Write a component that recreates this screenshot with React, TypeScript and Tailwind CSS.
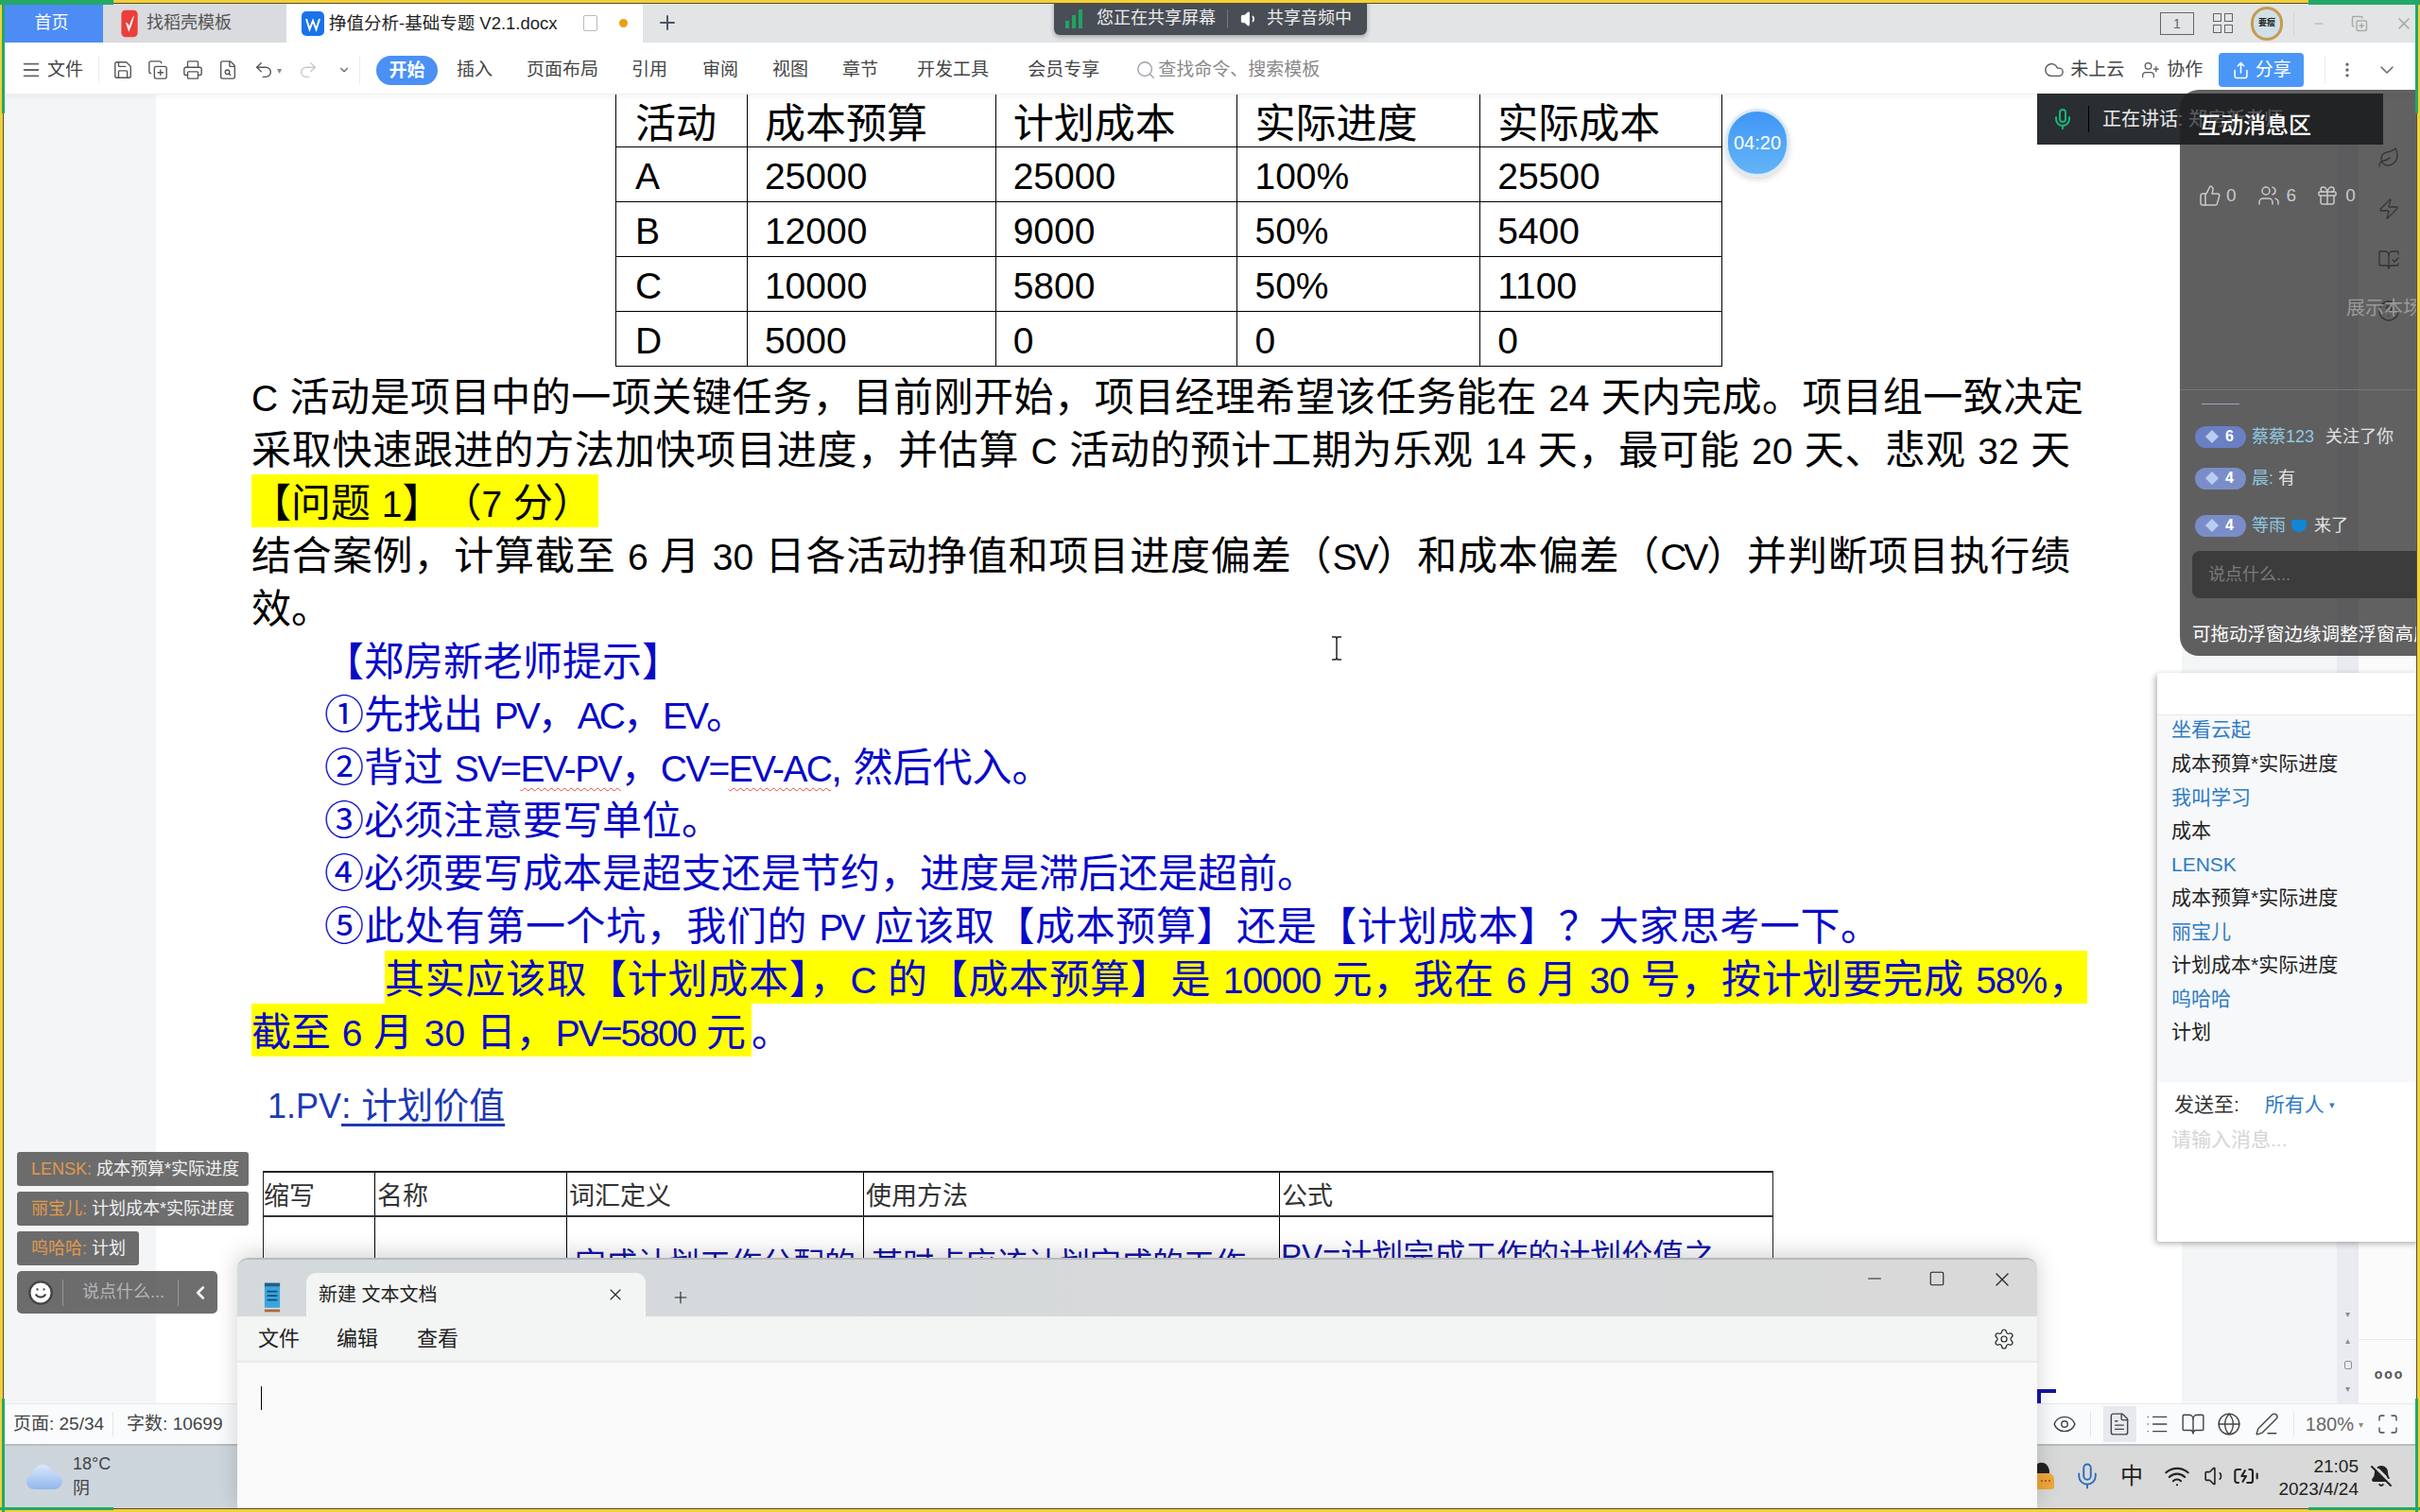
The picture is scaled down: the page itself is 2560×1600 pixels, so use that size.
import type { ReactNode } from "react"
import { BatteryCharging, BookOpen, ChevronDown, ChevronLeft, Gift, Globe, Maximize, Mic, Minus, MoreVertical, Plus, Printer, Redo2, Save, Search, Settings, Smile, Square, ThumbsUp, Undo2, Users, Volume1, Wifi, X, Eye, FileText, List, PenLine, Menu, Share, BellOff, Cloud, CircleHelp, Zap, BookOpenCheck, CopyPlus, FileSearch, Leaf, UserPlus } from "lucide-react"

function WpsLogo() {
  return (
    <svg width="24" height="26" viewBox="0 0 24 26">
      <rect width="24" height="26" rx="5" fill="#1a73e8" />
      <path d="M5 8l3.5 11L12 10l3.500 9L19 8" fill="none" stroke="#fff" strokeWidth="2" />
    </svg>
  )
}

function ShellLogo() {
  return (
    <svg width="22" height="36" viewBox="0 0 22 36">
      <rect width="22" height="36" rx="6" fill="#ea3f3a" />
      <path d="M6 16c1 5 3 9 4 13 3-7 6-14 7-22-3 4-5 9-6 14-1-2-3-4-5-5z" fill="#fff" />
    </svg>
  )
}

function NotepadIcon() {
  return (
    <svg width="20" height="36" viewBox="0 0 20 36">
      <rect x="1" y="1" width="18" height="29" fill="#3aa5dc" />
      <rect x="1" y="1" width="18" height="4" fill="#285f7d" />
      <path d="M4 11h12M4 16h12M4 21h12" stroke="#0f4f78" strokeWidth="2" />
      <rect x="1" y="32" width="18" height="3" fill="#a8673a" />
    </svg>
  )
}

function WeatherCloud() {
  return (
    <svg width="38" height="32" viewBox="0 0 38 32">
      <defs>
        <linearGradient id="wc" x1="0" y1="0" x2="0" y2="1">
          <stop offset="0" stopColor="#dbe8fb" />
          <stop offset="1" stopColor="#8fb7ee" />
        </linearGradient>
      </defs>
      <path d="M9 30C3 30 0 26 0 22c0-4 3-7 6-7 1-8 7-12 13-11 4 1 7 4 8 8 6 0 11 4 11 9s-4 9-9 9z" fill="url(#wc)" />
    </svg>
  )
}

function QQPenguin() {
  return (
    <svg width="18" height="30" viewBox="0 0 18 30">
      <path d="M0 2c6-3 12 0 13 8v6H0z" fill="#222" />
      <path d="M0 12h12c4 0 6 4 6 8v6c0 2-1 3-3 3H0z" fill="#f0a63a" />
      <path d="M4 20h10" stroke="#a8651a" strokeWidth="2" strokeDasharray="2 2" />
    </svg>
  )
}

// latin text in the document is narrower and smaller than the CJK around it
function L({ children }: { children: ReactNode }) {
  return <span className="text-[39px]">{children}</span>
}

function Cap({ children }: { children: ReactNode }) {
  return <span className="text-[39px] tracking-[-3px]">{children}</span>
}

function Formula({ children }: { children: ReactNode }) {
  return <span className="text-[39px] tracking-[-1.700px]">{children}</span>
}

function TableOne() {
  const rows = [
    ["活动", "成本预算", "计划成本", "实际进度", "实际成本"],
    ["A", "25000", "25000", "100%", "25500"],
    ["B", "12000", "9000", "50%", "5400"],
    ["C", "10000", "5800", "50%", "1100"],
    ["D", "5000", "0", "0", "0"],
  ]
  const widths = ["w-[138px]", "w-[263px]", "w-[256px]", "w-[257px]", "w-[256px]"]
  return (
    <div className="ml-[486px] w-[1171px] border-x border-b border-black text-black">
      {rows.map((row, i) => (
        <div key={i} className={i === 0 ? "flex h-[56px] border-b border-black text-[43px]" : i === 4 ? "flex h-[57px] text-[39px]" : "flex h-[58px] border-b border-black text-[39px]"}>
          {row.map((cell, j) => (
            <div key={j} className={j === 0 ? `${widths[j]} pl-[20px] leading-[62px]` : `${widths[j]} border-l border-black pl-[18px] leading-[62px]`}>
              {cell}
            </div>
          ))}
        </div>
      ))}
    </div>
  )
}

function TableTwo() {
  return (
    <div className="ml-[113px] mt-[41px] w-[1598px] border-t-2 border-x border-[#222] text-[27px] text-[#333]">
      <div className="flex h-[47px] border-b-2 border-[#333] leading-[50px]">
        <div className="w-[117px]">缩写</div>
        <div className="w-[203px] border-l border-black pl-[2px]">名称</div>
        <div className="w-[314px] border-l border-black pl-[2px]">词汇定义</div>
        <div className="w-[440px] border-l border-black pl-[2px]">使用方法</div>
        <div className="flex-1 border-l border-black pl-[2px]">公式</div>
      </div>
      <div className="flex h-[70px] text-[#1414a8]">
        <div className="w-[117px]"></div>
        <div className="w-[203px] border-l border-black"></div>
        <div className="w-[314px] border-l border-black pl-[8px] pt-[30px] text-[33px] leading-[40px] whitespace-nowrap overflow-hidden">完成计划工作分配的</div>
        <div className="w-[440px] border-l border-black pl-[8px] pt-[30px] text-[33px] leading-[40px] whitespace-nowrap overflow-hidden">某时点应该计划完成的工作</div>
        <div className="flex-1 border-l border-black pl-[1px] pt-[21px] text-[33px] leading-[40px] whitespace-nowrap">PV=计划完成工作的计划价值之</div>
      </div>
    </div>
  )
}

function DocPage() {
  const blue = "h-14 text-[#0a0ac8] ml-[77px]"
  const wavy = "underline decoration-wavy decoration-[#e0483e] decoration-1 underline-offset-[6px]"
  return (
    <div className="relative w-[2143px] h-full bg-white overflow-hidden shrink-0">
      <TableOne />
      <div className="pl-[101px] pt-[2px] text-[42px] leading-[62px] text-black">
        <div className="h-14 w-[1938px] [text-align-last:justify]"><L>C</L> 活动是项目中的一项关键任务，目前刚开始，项目经理希望该任务能在 <L>24</L> 天内完成。项目组一致决定</div>
        <div className="h-14 w-[1924px] [text-align-last:justify]">采取快速跟进的方法加快项目进度，并估算 <L>C</L> 活动的预计工期为乐观 <L>14</L> 天，最可能 <L>20</L> 天、悲观 <L>32</L> 天</div>
        <div className="h-14 w-[367px] bg-[#ffff00] whitespace-nowrap">【问题 <L>1</L>】（<L>7</L> 分）</div>
        <div className="h-14 w-[1924px] [text-align-last:justify]">结合案例，计算截至 <L>6</L> 月 <L>30</L> 日各活动挣值和项目进度偏差（<Cap>SV</Cap>）和成本偏差（<Cap>CV</Cap>）并判断项目执行绩</div>
        <div className="h-14">效。</div>
        <div className={blue}>【郑房新老师提示】</div>
        <div className={blue}>①先找出 <Cap>PV</Cap>，<Cap>AC</Cap>，<Cap>EV</Cap>。</div>
        <div className={blue}>
          ②背过 <Formula>SV=<span className={wavy}>EV-PV</span></Formula>，<Formula>CV=<span className={wavy}>EV-AC</span></Formula>, 然后代入。
        </div>
        <div className={blue}>③必须注意要写单位。</div>
        <div className={blue}>④必须要写成本是超支还是节约，进度是滞后还是超前。</div>
        <div className={`${blue} w-[1646px] [text-align-last:justify]`}>⑤此处有第一个坑，我们的 <Cap>PV</Cap> 应该取【成本预算】还是【计划成本】？大家思考一下。</div>
        <div className="h-14 ml-[141px] w-[1801px] bg-[#ffff00] text-[#0a0ac8] tracking-[-1px] [text-spacing-trim:normal] [text-align-last:justify]">其实应该取【计划成本】，<L>C</L> 的【成本预算】是 <L>10000</L> 元，我在 <L>6</L> 月 <L>30</L> 号，按计划要完成 <L>58%</L>，</div>
        <div className="h-14 flex text-[#0a0ac8]">
          <span className="bg-[#ffff00] w-[529px] whitespace-nowrap">截至 <L>6</L> 月 <L>30</L> 日，<span className="text-[39px] tracking-[-2px]">PV=5800</span> 元</span>
          <span>。</span>
        </div>
      </div>
      <div className="ml-[118px] mt-[24px] h-14 text-[38px] leading-[56px] text-[#1d39b4] whitespace-nowrap">
        <span className="text-[36px]">1.PV</span><span className="underline underline-offset-[6px] decoration-[3px]">: 计划价值</span>
      </div>
      <TableTwo />
      <div className="absolute left-[1990px] top-[1370px] w-[20px] h-[15px] border-t-[4px] border-l-[4px] border-[#1414a8]"></div>
      <svg className="absolute left-[1242px] top-[573px]" width="14" height="26" viewBox="0 0 14 26">
        <path d="M2 1h4l1 2 1-2h4M7 3v20M2 25h4l1-2 1 2h4" fill="none" stroke="#222" strokeWidth="1.500" />
      </svg>
    </div>
  )
}

function TopTabs() {
  return (
    <div className="h-[45px] flex bg-[#e2e4e6] text-[18px] shrink-0">
      <div className="w-[109px] bg-[#4d8cf5] text-white flex items-center justify-center pt-[4px]">首页</div>
      <div className="w-[194px] bg-[#d9dbde] text-[#555] flex items-center gap-[4px] pl-[20px] pt-[4px]">
        <div className="scale-[.8] -ml-[3px]"><ShellLogo /></div>
        <span className="ml-[3px]">找稻壳模板</span>
      </div>
      <div className="w-[377px] bg-white text-[#222] flex items-center pl-[16px] pt-[4px] gap-[5px] text-[18.500px]">
        <WpsLogo />
        <span className="whitespace-nowrap">挣值分析-基础专题 V2.1.docx</span>
        <span className="ml-[22px] w-[15px] h-[17px] border border-[#bbb] rounded-[2px]"></span>
        <span className="ml-[18px] w-[9px] h-[9px] rounded-full bg-[#e8a012]"></span>
      </div>
      <Plus className="ml-[14px] mt-[12px] text-[#4b5563]" size={24} />
      <div className="ml-auto flex items-center pr-[7px] pt-[4px] text-[#666]">
        <div className="w-[36px] h-[24px] border border-[#666] text-[14px] leading-[22px] flex justify-center mr-[20px]">1</div>
        <div className="grid grid-cols-2 gap-[3px] mr-[19px]">
          <span className="w-[9px] h-[9px] border border-[#666]"></span>
          <span className="w-[9px] h-[9px] border border-[#666]"></span>
          <span className="w-[9px] h-[9px] border border-[#666]"></span>
          <span className="w-[9px] h-[9px] border border-[#666]"></span>
        </div>
        <div className="w-[34px] h-[36px] rounded-full border-[3px] border-[#c69a4e] bg-[#cfe0e6] flex items-center justify-center text-[9px] font-bold text-[#222] mr-[11px]">要瘦</div>
        <div className="w-px h-[26px] bg-[#d2d4d6] mr-[19px]"></div>
        <Minus size={14} className="text-[#aaa] mr-[27px]" />
        <CopyPlus size={18} className="text-[#aaa] mr-[28px]" />
        <X size={20} className="text-[#aaa]" />
      </div>
    </div>
  )
}

function Toolbar() {
  return (
    <div className="h-[55px] flex items-center bg-white text-[19px] text-[#444] shrink-0 border-b border-[#eee] whitespace-nowrap shadow-[0_2px_6px_rgba(0,0,0,0.05)] relative z-10 pt-[4px]">
      <Menu size={22} className="ml-[22px] text-[#666]" />
      <span className="ml-[6px]">文件</span>
      <div className="ml-[16px] w-px h-[30px] bg-[#ececec]"></div>
      <div className="ml-[14px] flex items-center gap-[15px] text-[#555]">
        <Save size={22} strokeWidth={1.500} />
        <CopyPlus size={22} strokeWidth={1.500} />
        <Printer size={22} strokeWidth={1.500} />
        <FileSearch size={22} strokeWidth={1.500} />
      </div>
      <Undo2 size={22} strokeWidth={1.500} className="ml-[16px] text-[#555]" />
      <span className="ml-[3px] text-[10px] text-[#888]">▾</span>
      <Redo2 size={22} strokeWidth={1.500} className="ml-[17px] text-[#c9c9c9]" />
      <ChevronDown size={14} className="ml-[20px] text-[#666]" />
      <div className="ml-[9px] w-px h-[30px] bg-[#ececec]"></div>
      <span className="ml-[17px] w-[65px] h-[31px] rounded-full bg-[#4a90f5] text-white font-bold leading-[31px] text-center">开始</span>
      <span className="ml-[20px]">插入</span>
      <span className="ml-[36px]">页面布局</span>
      <span className="ml-[35px]">引用</span>
      <span className="ml-[37px]">审阅</span>
      <span className="ml-[36px]">视图</span>
      <span className="ml-[36px]">章节</span>
      <span className="ml-[41px]">开发工具</span>
      <span className="ml-[41px]">会员专享</span>
      <Search size={22} strokeWidth={1.500} className="ml-[38px] text-[#9aa0a6]" />
      <span className="ml-[2px] text-[#888]">查找命令、搜索模板</span>
      <Cloud size={22} strokeWidth={1.500} className="ml-[766px] text-[#555]" />
      <span className="ml-[6px]">未上云</span>
      <UserPlus size={20} strokeWidth={1.500} className="ml-[18px] text-[#555]" />
      <span className="ml-[7px]">协作</span>
      <div className="ml-[17px] w-[90px] h-[36px] rounded-[4px] bg-[#4a97f7] text-white flex items-center justify-center gap-[6px]">
        <Share size={19} />分享
      </div>
      <div className="ml-[22px] w-px h-[30px] bg-[#ececec]"></div>
      <MoreVertical size={20} className="ml-[13px] text-[#666]" />
      <ChevronDown size={24} strokeWidth={1.500} className="ml-[20px] text-[#666]" />
    </div>
  )
}

function StatusBar() {
  return (
    <div className="h-[43px] flex items-center bg-[#fafbfc] border-t border-[#e8e9ec] text-[19px] text-[#444] shrink-0 whitespace-nowrap">
      <span className="ml-[14px]">页面: 25/34</span>
      <span className="ml-[9px] w-px h-[26px] bg-[#e4e4e4]"></span>
      <span className="ml-[14px]">字数: 10699</span>
      <div className="ml-auto flex items-center text-[#444]">
        <Eye size={26} strokeWidth={1.300} />
        <span className="ml-[14px] w-px h-[26px] bg-[#e4e4e4]"></span>
        <div className="ml-[13px] w-[35px] h-[38px] bg-[#e6e9ee] flex items-center justify-center"><FileText size={26} strokeWidth={1.300} /></div>
        <List size={26} strokeWidth={1.300} className="ml-[9px]" />
        <BookOpen size={26} strokeWidth={1.300} className="ml-[12px]" />
        <Globe size={26} strokeWidth={1.300} className="ml-[12px]" />
        <PenLine size={26} strokeWidth={1.300} className="ml-[14px]" />
        <span className="ml-[15px] w-px h-[26px] bg-[#e4e4e4]"></span>
        <span className="ml-[12px] text-[#666] text-[20px]">180%</span>
        <span className="ml-[5px] text-[10px] text-[#888]">▾</span>
        <Maximize size={24} strokeWidth={1.300} className="ml-[14px] mr-[22px]" />
      </div>
    </div>
  )
}

function Taskbar() {
  return (
    <div className="h-[72px] flex items-center bg-gradient-to-r from-[#ccd5dd] via-[#d6d8da] to-[#d9d9d9] border-t-2 border-[#b9bcbf] text-[#222] shrink-0 whitespace-nowrap pb-[6px]">
      <div className="ml-[28px]"><WeatherCloud /></div>
      <div className="ml-[11px] text-[18px] leading-[26px] text-[#444]">
        <div>18°C</div>
        <div>阴</div>
      </div>
      <div className="ml-auto flex items-center">
        <QQPenguin />
        <Mic size={30} strokeWidth={1.500} className="ml-[20px] text-[#2b6cb8]" />
        <span className="ml-[20px] text-[24px]">中</span>
        <Wifi size={28} strokeWidth={1.800} className="ml-[22px]" />
        <Volume1 size={26} strokeWidth={1.500} className="ml-[14px]" />
        <BatteryCharging size={28} strokeWidth={1.800} className="ml-[5px]" />
        <div className="ml-[15px] w-[90px] pt-[4px] text-right text-[19px] leading-[24px] text-[#222]">
          <div>21:05</div>
          <div>2023/4/24</div>
        </div>
        <BellOff size={24} fill="#222" className="ml-[12px] mr-[29px]" />
      </div>
    </div>
  )
}

function ChatBadge({ level, light }: { level: string; light?: boolean }) {
  return (
    <span className={light ? "w-[54px] h-[23px] rounded-full bg-[#7b8dc8] flex items-center justify-center gap-[9px] text-white text-[16px] font-bold shrink-0" : "w-[54px] h-[23px] rounded-full bg-[#6a7fc4] flex items-center justify-center gap-[9px] text-white text-[16px] font-bold shrink-0"}>
      <span className="w-[10px] h-[10px] bg-[#b9cdf2] rotate-45"></span>
      {level}
    </span>
  )
}

function LivePanel() {
  return (
    <>
      <div className="absolute left-[2155px] top-[99px] w-[366px] h-[54px] bg-[#2a2d31] flex items-center text-[20px] text-white/90 z-20 whitespace-nowrap">
        <Mic size={24} className="ml-[15px] text-[#19b37a]" />
        <span className="ml-[15px] w-px h-[28px] bg-black"></span>
        <span className="ml-[14px]">正在讲话: 郑房新老师</span>
      </div>
      <div className="absolute left-[2306px] top-[95px] w-[254px] h-[599px] rounded-l-[20px] bg-[#202020]/70 z-30 overflow-hidden text-white whitespace-nowrap">
        <div className="pl-[19px] pt-[23px] text-[24px] leading-[30px] font-medium">互动消息区</div>
        <div className="mt-[47px] ml-[20px] h-[24px] flex items-center text-[19px] text-[#c9c9c9]">
          <ThumbsUp size={24} strokeWidth={1.500} />
          <span className="ml-[5px]">0</span>
          <Users size={24} strokeWidth={1.500} className="ml-[22px]" />
          <span className="ml-[7px]">6</span>
          <Gift size={24} strokeWidth={1.500} className="ml-[21px]" />
          <span className="ml-[7px]">0</span>
        </div>
        <div className="absolute left-[209px] top-[60px] flex flex-col gap-[30px] text-[#333]">
          <Leaf size={24} strokeWidth={1.300} />
          <Zap size={24} strokeWidth={1.300} />
          <BookOpenCheck size={24} strokeWidth={1.300} />
          <CircleHelp size={24} strokeWidth={1.300} />
        </div>
        <div className="absolute left-[176px] top-[216px] text-[20px] text-[#9a9a9a]">展示本场</div>
        <div className="mt-[193px] h-px bg-[#777]"></div>
        <div className="ml-[23px] mt-[14px] w-[40px] h-px bg-[#9ea9b5]"></div>
        <div className="ml-[16px] mt-[19px] flex flex-col text-[18px] text-[#e0e0e0]">
          <div className="flex items-center gap-[6px] h-[30px]">
            <ChatBadge level="6" />
            <span className="text-[#8fc8e0]">蔡蔡123</span>
            <span className="ml-[6px]">关注了你</span>
          </div>
          <div className="flex items-center gap-[6px] h-[30px] mt-[14px]">
            <ChatBadge level="4" light />
            <span><span className="text-[#8fc8e0]">晨:</span> 有</span>
          </div>
          <div className="flex items-center gap-[6px] h-[30px] mt-[20px]">
            <ChatBadge level="4" light />
            <span className="text-[#8fc8e0]">等雨</span>
            <span className="w-[16px] h-[13px] rounded-b-[8px] rounded-t-[2px] bg-[#1186d8]"></span>
            <span className="ml-[2px]">来了</span>
          </div>
        </div>
        <div className="ml-[13px] mt-[12px] h-[50px] rounded-l-[8px] bg-[#3c3c3c] pl-[17px] text-[18px] leading-[50px] text-[#7a7a7a]">说点什么...</div>
        <div className="ml-[13px] mt-[26px] text-[19.500px] leading-[24px] text-white">可拖动浮窗边缘调整浮窗高度吧</div>
      </div>
      <div className="absolute left-[2282px] top-[712px] w-[278px] h-[602px] bg-white z-20 shadow-[-2px_2px_6px_rgba(0,0,0,0.3)] rounded-l-[3px] text-[21px] whitespace-nowrap">
        <div className="h-[45px] border-b border-[#e8e8e8]"></div>
        <div className="h-[388px] bg-[#f7f8fa] pl-[15px] leading-[35.500px] text-[#222]">
          <div className="h-[33px] leading-[30px] text-[#2e7bc4]">坐看云起</div>
          <div>成本预算*实际进度</div>
          <div className="text-[#2e7bc4]">我叫学习</div>
          <div>成本</div>
          <div className="text-[#2e7bc4]">LENSK</div>
          <div>成本预算*实际进度</div>
          <div className="text-[#2e7bc4]">丽宝儿</div>
          <div>计划成本*实际进度</div>
          <div className="text-[#2e7bc4]">呜哈哈</div>
          <div>计划</div>
        </div>
        <div className="pl-[18px] pt-[8px] flex items-center h-[40px] text-[#333]">
          <span>发送至:</span>
          <span className="ml-[27px] text-[#2e7bc4]">所有人</span>
          <span className="ml-[5px] text-[11px] text-[#2e7bc4]">▾</span>
        </div>
        <div className="pl-[15px] mt-[6px] leading-[30px] text-[#d5d5d5]">请输入消息...</div>
      </div>
    </>
  )
}

function FloatingBubbles() {
  return (
    <div className="absolute left-[18px] top-[1219px] flex flex-col gap-[6px] z-20 text-[18px] text-white/90 whitespace-nowrap">
      <div className="w-[245px] h-[36px] rounded-[3px] bg-[#4a4a4a]/80 flex items-center pl-[15px]">
        <span className="text-[#e09a4a]">LENSK:</span>&nbsp;成本预算*实际进度
      </div>
      <div className="w-[245px] h-[36px] rounded-[3px] bg-[#4a4a4a]/80 flex items-center pl-[15px]">
        <span className="text-[#e09a4a]">丽宝儿:</span>&nbsp;计划成本*实际进度
      </div>
      <div className="w-[129px] h-[36px] rounded-[3px] bg-[#4a4a4a]/80 flex items-center pl-[15px]">
        <span className="text-[#e09a4a]">呜哈哈:</span>&nbsp;计划
      </div>
      <div className="w-[212px] h-[45px] rounded-[5px] bg-[#4a4a4a]/80 flex items-center">
        <Smile size={28} className="ml-[11px] text-[#444]" fill="#fff" />
        <span className="ml-[9px] w-px h-[28px] bg-[#999]"></span>
        <span className="ml-[20px] text-[#b5b5b5]">说点什么...</span>
        <span className="ml-[14px] w-px h-[28px] bg-[#999]"></span>
        <ChevronLeft size={22} strokeWidth={3} className="ml-[12px]" />
      </div>
    </div>
  )
}

function Notepad() {
  return (
    <div className="absolute left-[251px] top-[1331px] w-[1904px] h-[265px] bg-[#f9f9f9] rounded-t-[12px] border-t-2 border-[#b8babb] shadow-[0_-4px_24px_rgba(0,0,0,0.18)] z-20 overflow-hidden text-[#222] whitespace-nowrap">
      <div className="h-[60px] flex bg-gradient-to-r from-[#d4d9dc] to-[#d9d9d9]">
        <div className="ml-[27px] mt-[22px] scale-[.9] h-fit"><NotepadIcon /></div>
        <div className="ml-[26px] mt-[14px] w-[359px] h-[46px] rounded-t-[10px] bg-[#f3f4f4] flex items-center pl-[13px] text-[20px]">
          新建 文本文档
          <X size={20} strokeWidth={1.300} className="ml-[178px]" />
        </div>
        <Plus size={20} strokeWidth={1.300} className="ml-[27px] mt-[30px]" />
        <div className="ml-auto flex items-start pt-[9px] pr-[25px]">
          <Minus size={22} strokeWidth={1.200} />
          <Square size={18} strokeWidth={1.500} className="ml-[46px] mt-[2px]" />
          <X size={24} strokeWidth={1.300} className="ml-[48px]" />
        </div>
      </div>
      <div className="h-[49px] flex items-center bg-[#f3f4f4] border-b-2 border-[#e9e9e9] text-[22px]">
        <span className="ml-[22px]">文件</span>
        <span className="ml-[39px]">编辑</span>
        <span className="ml-[41px]">查看</span>
        <Settings size={24} strokeWidth={1.200} className="ml-auto mr-[23px]" />
      </div>
      <div className="ml-[25px] mt-[25px] w-px h-[25px] bg-black"></div>
    </div>
  )
}

export default function App() {
  return (
    <div className="relative w-[2560px] h-[1600px] overflow-hidden flex flex-col bg-white [font-family:'Liberation_Sans','Noto_Sans_CJK_SC',sans-serif] [text-spacing-trim:space-all]">
      <TopTabs />
      <Toolbar />
      <div className="h-[1385px] flex bg-[#f4f5f7] shrink-0">
        <div className="w-[165px] shrink-0"></div>
        <DocPage />
        <div className="flex-1 flex">
          <div className="w-[164px]"></div>
          <div className="w-[23px] bg-[#e9ebf0] flex flex-col items-center justify-end pb-[8px] text-[10px] leading-[14px] gap-[14px] text-[#8a8f99]">
            <span>▾</span>
            <span>▴</span>
            <span className="w-[8px] h-[9px] border border-[#8a8f99] rounded-[2px]"></span>
            <span>▾</span>
          </div>
          <div className="flex-1 bg-[#fbfbfc] flex flex-col justify-end">
            <div className="h-[68px] border-t border-[#e9e9ec] pt-[26px] text-center text-[#555] text-[14px] leading-[20px] font-bold tracking-[2px]">ooo</div>
          </div>
        </div>
      </div>
      <StatusBar />
      <Taskbar />

      <div className="absolute left-[1115px] top-0 w-[331px] h-[37px] rounded-b-[6px] bg-[#494e56] text-white/90 text-[18px] flex items-center z-30 shadow-[0_2px_5px_rgba(0,0,0,0.3)] whitespace-nowrap pt-[2px]">
        <div className="ml-[12px] flex items-end gap-[3px] h-[20px]">
          <span className="w-[4px] h-[8px] bg-[#1fa464]"></span>
          <span className="w-[4px] h-[14px] bg-[#1fa464]"></span>
          <span className="w-[4px] h-[20px] bg-[#1fa464]"></span>
        </div>
        <span className="ml-[15px]">您正在共享屏幕</span>
        <span className="ml-[12px] w-px h-[20px] bg-[#777]"></span>
        <Volume1 size={20} className="ml-[13px]" fill="#fff" />
        <span className="ml-[8px]">共享音频中</span>
      </div>

      <div className="absolute left-[1825px] top-[115px] w-[68px] h-[72px] rounded-full bg-gradient-to-b from-[#3f97f5] to-[#63b4f6] border-[3px] border-[#dbe9f7] text-white text-[20px] flex items-center justify-center z-20 shadow-[0_3px_6px_rgba(0,0,0,0.15)]">04:20</div>

      <LivePanel />
      <FloatingBubbles />
      <Notepad />

      <div className="absolute inset-0 border-[3px] border-[#f3cf3a] z-40 pointer-events-none">
        <div className="h-full w-full border border-[#55502a]"></div>
      </div>
      <div className="absolute left-0 top-0 w-[120px] h-[5px] bg-[#23a868] z-50"></div>
      <div className="absolute right-0 top-0 w-[118px] h-[5px] bg-[#23a868] z-50"></div>
      <div className="absolute left-[2px] top-0 w-[3px] h-[120px] bg-[#23a868] z-50"></div>
      <div className="absolute right-[2px] top-0 w-[3px] h-[120px] bg-[#23a868] z-50"></div>
      <div className="absolute left-[2px] bottom-0 w-[3px] h-[120px] bg-[#23a868] z-50"></div>
      <div className="absolute right-[2px] bottom-0 w-[3px] h-[120px] bg-[#23a868] z-50"></div>
      <div className="absolute left-0 bottom-[2px] w-[120px] h-[3px] bg-[#23a868] z-50"></div>
      <div className="absolute right-0 bottom-[2px] w-[118px] h-[3px] bg-[#23a868] z-50"></div>
    </div>
  )
}
